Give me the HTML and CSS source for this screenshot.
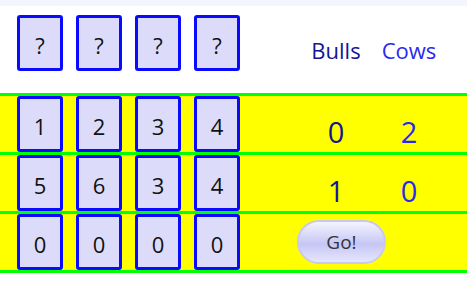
FILE: index.html
```html
<!doctype html>
<html>

<head>
    <meta charset="UTF-8">
    <meta name="viewport" content="width=device-width, initial-scale=1.0">
    <link rel="stylesheet" href="styles.css">
    <title>bulls and cows</title>
</head>

<body>
    <div class="topbar"></div>
    <div class="header">
        <div class="guess">
            <div class="peg">?</div>
            <div class="peg">?</div>
            <div class="peg">?</div>
            <div class="peg">?</div>
        </div>
        <div class="label bulls">Bulls</div>
        <div class="label cows">Cows</div>
    </div>
    <div class="board">
        <div class="row">
            <div class="guess">
                <div class="peg">1</div>
                <div class="peg">2</div>
                <div class="peg">3</div>
                <div class="peg">4</div>
            </div>
            <div class="score bulls">0</div>
            <div class="score cows">2</div>
        </div>
        <div class="row">
            <div class="guess">
                <div class="peg">5</div>
                <div class="peg">6</div>
                <div class="peg">3</div>
                <div class="peg">4</div>
            </div>
            <div class="score bulls">1</div>
            <div class="score cows">0</div>
        </div>
        <div class="row last">
            <div class="guess">
                <div class="peg">0</div>
                <div class="peg">0</div>
                <div class="peg">0</div>
                <div class="peg">0</div>
            </div>
            <div class="action">
                <button class="go">Go!</button>
            </div>
        </div>
    </div>
</body>

</html>
```

FILE: styles.css
```css
body {
    margin: 0;
    font-family: "Open Sans", sans-serif;
    background-color: white;
}

.topbar {
    height: 6px;
    background-color: #f3f6fc;
}

.header {
    display: flex;
    height: 87px;
}

.header .guess {
    padding-top: 9px;
}

.guess {
    display: flex;
    gap: 13px;
    width: 280px;
    padding-left: 17px;
}

.peg {
    box-sizing: border-box;
    width: 46px;
    height: 56px;
    border: 3px solid #0a0aff;
    border-radius: 3px;
    background-color: #dcdcfa;
    color: #111;
    font-size: 22px;
    display: flex;
    justify-content: center;
    align-items: center;
    padding-top: 4px;
}

.label {
    align-self: center;
    font-size: 22px;
    text-align: center;
}

.bulls {
    width: 78px;
    color: #141496;
}

.cows {
    width: 68px;
    color: #2a2aee;
}

.row {
    display: flex;
    height: 56px;
    background-color: yellow;
    border-top: 3px solid lime;
}

.row.last {
    border-bottom: 3px solid lime;
}

.score {
    align-self: flex-end;
    font-size: 29px;
    line-height: 40px;
    text-align: center;
}

.action {
    display: flex;
    align-items: center;
    width: 146px;
}

.go {
    width: 89px;
    height: 44px;
    border: 2px solid #c8c8f0;
    border-radius: 22px;
    background-image: linear-gradient(to bottom, #f4f4fe, #c6c6f6 55%, #e6e6fc);
    color: #333;
    font-family: "Open Sans", sans-serif;
    font-size: 19px;
    padding: 0;
}
```
